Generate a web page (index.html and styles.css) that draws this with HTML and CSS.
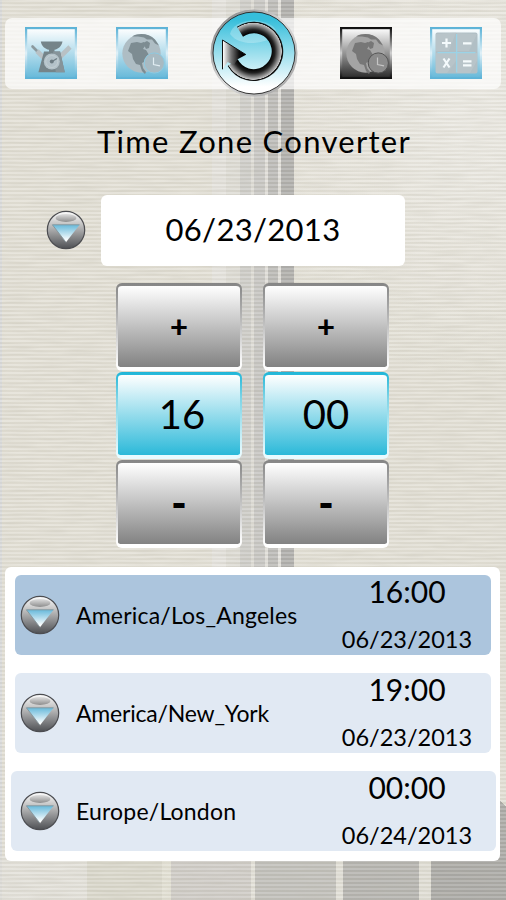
FILE: index.html
```
<!DOCTYPE html>
<html lang="en">
<head>
  <meta charset="UTF-8">
  <title>Time Zone Converter</title>
  <meta name="viewport" content="width=device-width, initial-scale=1">
  <link rel="stylesheet" href="styles.css">
</head>
<body>
  <!-- Paper texture and shared icon parts -->
  <svg class="texture" width="506" height="900" aria-hidden="true">
    <defs>
      <filter id="linen" x="0" y="0" width="100%" height="100%">
        <feTurbulence type="fractalNoise" baseFrequency="0.03 0.4" numOctaves="2" seed="4"/>
        <feColorMatrix values="0 0 0 0 0.5  0 0 0 0 0.48  0 0 0 0 0.4  0.4 0 0 0 -0.15"/>
      </filter>
      <linearGradient id="tileBlue" x1="0" y1="0" x2="0" y2="1">
        <stop offset="0" stop-color="#fff"/>
        <stop offset="1" stop-color="#67b9d9"/>
      </linearGradient>
      <linearGradient id="edgeBlue" x1="0" y1="0" x2="0" y2="1">
        <stop offset="0" stop-color="#5db3d7"/>
        <stop offset=".5" stop-color="#e0f0f7"/>
        <stop offset="1" stop-color="#5db3d7"/>
      </linearGradient>
      <linearGradient id="tileDark" x1="0" y1="0" x2="0" y2="1">
        <stop offset="0" stop-color="#fff"/>
        <stop offset="1" stop-color="#2b2b2b"/>
      </linearGradient>
      <linearGradient id="edgeDark" x1="0" y1="0" x2="0" y2="1">
        <stop offset="0" stop-color="#111"/>
        <stop offset=".5" stop-color="#d0d0d0"/>
        <stop offset="1" stop-color="#111"/>
      </linearGradient>
      <linearGradient id="ballGray" x1="0" y1="0" x2="0" y2="1">
        <stop offset="0" stop-color="#fff"/>
        <stop offset=".35" stop-color="#c3c3c3"/>
        <stop offset="1" stop-color="#4e5054"/>
      </linearGradient>
      <linearGradient id="ballShine" x1="0" y1="0" x2="0" y2="1">
        <stop offset="0" stop-color="#dedede"/>
        <stop offset="1" stop-color="#8e8e8e"/>
      </linearGradient>
      <linearGradient id="arrowBlue" x1="0" y1="0" x2="0" y2="1">
        <stop offset="0" stop-color="#67b9da"/>
        <stop offset=".9" stop-color="#fff"/>
      </linearGradient>
      <linearGradient id="refreshFill" x1="0" y1="0" x2="0" y2="1">
        <stop offset="0.1" stop-color="#36bedb"/>
        <stop offset=".9" stop-color="#fff"/>
      </linearGradient>
      <radialGradient id="ringShade" gradientUnits="userSpaceOnUse" cx="43.300" cy="42.300" r="30">
        <stop offset=".6" stop-color="#000"/>
        <stop offset=".72" stop-color="#222"/>
        <stop offset=".94" stop-color="#c4c4c4"/>
        <stop offset=".955" stop-color="#111"/>
      </radialGradient>
      <linearGradient id="arrowHead" gradientUnits="userSpaceOnUse" x1="13" y1="0" x2="33" y2="0">
        <stop offset="0" stop-color="#fff"/>
        <stop offset=".4" stop-color="#777"/>
        <stop offset=".8" stop-color="#111"/>
        <stop offset="1" stop-color="#000"/>
      </linearGradient>
      <linearGradient id="ringRim" x1="0" y1="0" x2="1" y2="1">
        <stop offset="0" stop-color="#777"/>
        <stop offset=".5" stop-color="#ddd"/>
        <stop offset="1" stop-color="#999"/>
      </linearGradient>
      <symbol id="drop" viewBox="0 0 40 40">
        <circle cx="20" cy="20" r="18.7" fill="url(#ballGray)" stroke="#4c4d51" stroke-width="1.2"/>
        <ellipse cx="20" cy="8" rx="10.5" ry="3.9" fill="url(#ballShine)"/>
        <path d="M6.4 14.8h27.2L20 32.3z" fill="url(#arrowBlue)"/>
        <path d="M20 32.3L6.4 14.8h27.2" fill="none" stroke="#85959c" stroke-width=".9"/>
      </symbol>
      <symbol id="globe" viewBox="0 0 52 52">
        <circle class="sea" cx="25.5" cy="26.5" r="19.2"/>
        <path class="land" d="M15 16l6-1 4 1 3-1 1 4-2 3 3 1 3 5-3 3-2 4-2 1 1 5 3 4-1 2-3-3-2-6-4-1-3-5-1-5-4-3z"/>
        <path class="land" d="M16 9.500c7-4 17-3 23 3l4 6-4-2-3-4-5 0-3-2-6-1z"/>
        <path class="land" d="M27 16l4-2 3 2-1 5-3 1z"/>
        <circle class="clock" cx="38.3" cy="36" r="10.1"/>
        <path class="hands" d="M37.5 30.5v7l6.5 1.3"/>
      </symbol>
    </defs>
    <rect width="506" height="900" filter="url(#linen)"/>
  </svg>

  <div class="app">
    <nav class="toolbar">
      <svg class="tool" viewBox="0 0 52 52">
        <rect x="1" y="1" width="50" height="50" fill="url(#tileBlue)" stroke="url(#edgeBlue)" stroke-width="2.4"/>
        <path d="M7.500 19.500l8 8" stroke="#8b999e" stroke-width="2.600" stroke-linecap="round"/>
        <path d="M12 24l7 7M35 30l10-10" stroke="#b8c1c5" stroke-width="4.6"/>
        <path d="M15.8 14.4h21.7c-1 5-4 7.4-8 8.4v1.8h5.6l4.7 20.6H13.4L19 24.6h5v-1.8c-4-1-7.3-3.5-8.2-8.4z" fill="#758489"/>
        <path d="M28 24.6h7.1l4.7 20.6h-9z" fill="#86949a"/>
        <circle cx="26.8" cy="34.5" r="8" fill="#b3c2c9"/>
        <circle cx="26.8" cy="34.5" r="6" fill="none" stroke="#c8d2d6" stroke-width=".7"/>
        <path d="M27 34.5l5-3" stroke="#6c7b82" stroke-width="1.4"/>
        <circle cx="26.8" cy="34.5" r="2" fill="#6c7b82"/>
      </svg>
      <svg class="tool" viewBox="0 0 52 52">
        <rect x="1" y="1" width="50" height="50" fill="url(#tileBlue)" stroke="url(#edgeBlue)" stroke-width="2.4"/>
        <use href="#globe" class="globe-blue"/>
      </svg>
      <svg class="refresh" viewBox="0 0 88 88">
        <circle cx="44" cy="44" r="42.2" fill="url(#refreshFill)" stroke="url(#ringRim)" stroke-width="2.6"/>
        <circle cx="44" cy="44" r="41" fill="none" stroke="#222" stroke-width=".9"/>
        <path d="M20 25c2-11 22-18 39-10 8 4 9 10 5 13-12 7-34 10-44-3z" fill="#fff" opacity=".25"/>
        <path d="M27 17.700A29.700 29.700 0 1 1 17.700 57L27.700 50.300A18 18 0 1 0 33 27.700z" fill="url(#ringShade)"/>
        <path d="M12.500 31L36 45.700l-8.300 4.600-4 6-6-3.200-5.200 7z" fill="url(#arrowHead)"/>
        <path d="M12.500 60.300V31L36 45.700" fill="none" stroke="#111" stroke-width="1"/>
      </svg>
      <svg class="tool" viewBox="0 0 52 52">
        <rect x="1" y="1" width="50" height="50" fill="url(#tileDark)" stroke="url(#edgeDark)" stroke-width="2.4"/>
        <use href="#globe" class="globe-dark"/>
      </svg>
      <svg class="tool" viewBox="0 0 52 52">
        <rect x="1" y="1" width="50" height="50" fill="url(#tileBlue)" stroke="url(#edgeBlue)" stroke-width="2.4"/>
        <rect x="5.5" y="5.5" width="42" height="41" rx="2" fill="#b1bfc5"/>
        <path d="M26 5.5L19 24H6V7zM47 7L39 24H27V6zM26 26v8l-9 12H6V26zM47 26v8l-7 12H27V26z" fill="#c0c9cd" opacity=".5"/>
        <path d="M26.6 7v38.5M7.5 25.6h38" stroke="#9bd3e7" stroke-width="1.3"/>
        <path d="M12 16h9M16.5 11.5v9M33 16.3h8.5M13.5 31.5l6 9M19.5 31.5l-6 9M33 34.3h8.5M33 38.4h8.5" stroke="#f4fafc" stroke-width="2.2"/>
      </svg>
    </nav>

    <h1>Time Zone Converter</h1>

    <div class="date-row">
      <svg class="drop"><use href="#drop"/></svg>
      <div class="date-field"><span>06/23/2013</span></div>
    </div>

    <div class="picker">
      <button type="button" class="key plus">+</button>
      <button type="button" class="key plus">+</button>
      <button type="button" class="key value hours">16</button>
      <button type="button" class="key value">00</button>
      <button type="button" class="key minus">-</button>
      <button type="button" class="key minus">-</button>
    </div>

    <div class="zones">
      <div class="zone active">
        <svg class="drop"><use href="#drop"/></svg>
        <span class="name angeles">America/Los_Angeles</span>
        <div class="when"><span class="time">16:00</span><span class="day">06/23/2013</span></div>
      </div>
      <div class="zone">
        <svg class="drop"><use href="#drop"/></svg>
        <span class="name york">America/New_York</span>
        <div class="when"><span class="time">19:00</span><span class="day">06/23/2013</span></div>
      </div>
      <div class="zone wide">
        <svg class="drop"><use href="#drop"/></svg>
        <span class="name london">Europe/London</span>
        <div class="when"><span class="time">00:00</span><span class="day">06/24/2013</span></div>
      </div>
    </div>
  </div>
</body>
</html>
```
FILE: styles.css
```
:root {
  --paper: #e3e0d6;
  --text: #000;
}
* {
  box-sizing: border-box;
}
body {
  margin: 0;
  width: 506px;
  height: 900px;
  overflow: hidden;
  font-family: Lato, sans-serif;
  color: var(--text);
  /* weave, bottom swatches, edge of the right swatch, vertical stripes, light */
  background:
    repeating-linear-gradient(rgba(255, 255, 255, 0.16) 0 2px, rgba(120, 115, 90, 0.05) 2px 4px),
    linear-gradient(90deg, #deddd9 2px, #e3e1da 2px 87px, #dad8cc 87px 162px, #e3e1d5 162px 171px, #cfccc7 171px 251px, #e3e1d9 251px 255px, #c0bfba 255px 336px, #e2e0d8 336px 343px, #b4b3af 343px 419px, #e0ded5 419px 431px, #a9a8a5 431px) 0 856px / 506px 44px no-repeat,
    linear-gradient(45deg, #aaa9a6 72%, transparent 73%) 496px 801px / 10px 10px no-repeat,
    linear-gradient(#aaa9a6, #aaa9a6) 496px 810px / 10px 50px no-repeat,
    linear-gradient(90deg, #dadbdc 2px, transparent 2px 212px, #e5e3de 212px 226px, #dedcd5 226px 240px, #cecdc9 240px 251px, #dedcd6 251px 254px, #c7c6c3 254px 265px, #e1dfda 265px 268px, #bbbab7 268px 278px, #e3e1dc 278px 281px, #afaeac 281px 294px, transparent 294px),
    radial-gradient(circle at 480px 120px, #eceae4, transparent 260px),
    var(--paper);
}
.texture {
  position: absolute;
  top: 0;
  left: 0;
}
.app {
  position: relative;
  padding: 0 6px 0 5px;
}
.toolbar {
  display: flex;
  align-items: center;
  justify-content: space-between;
  width: 496px;
  height: 71px;
  margin-top: 18px;
  padding: 0 19px 1px 20px;
  background: rgba(255, 255, 255, 0.7);
  border-radius: 7px;
}
.tool {
  width: 52px;
  height: 52px;
}
.refresh {
  width: 88px;
  height: 88px;
  margin: -9px 3px -9px 4px;
}
.globe-blue {
  --sea: #aebdc4;
  --land: #7d8c92;
  --clock: #a8bac2;
  --clock-rim: #8ecae1;
  --hand: #e1edf2;
}
.globe-dark {
  --sea: #a4a4a4;
  --land: #777;
  --clock: #8b8b8b;
  --clock-rim: #555;
  --hand: #c5c5c5;
}
.sea {
  fill: var(--sea);
}
.land {
  fill: var(--land);
}
.clock {
  fill: var(--clock);
  stroke: var(--clock-rim);
}
.hands {
  fill: none;
  stroke: var(--hand);
  stroke-width: 1.2;
}
h1 {
  margin: 32px 0 0 92px;
  font-size: 31px;
  line-height: 40px;
  font-weight: 400;
  letter-spacing: 1.3px;
  white-space: nowrap;
}
.date-row {
  display: flex;
  align-items: center;
  gap: 15px;
  height: 71px;
  margin: 34px 0 0 41px;
}
.drop {
  flex: none;
  width: 40px;
  height: 40px;
}
.date-row .drop {
  margin-top: -2px;
}
.date-field {
  width: 304px;
  height: 71px;
  background: #fff;
  border-radius: 6px;
  font-size: 31px;
  line-height: 68px;
  letter-spacing: 0.3px;
  text-align: center;
}
.picker {
  display: grid;
  grid-template-columns: 126px 126px;
  grid-auto-rows: 87.5px;
  gap: 1px 21px;
  margin: 17px 0 0 111px;
}
.key {
  padding: 0;
  border: solid transparent;
  border-width: 3px 2px 4px;
  border-radius: 6px;
  background:
    linear-gradient(#fff, #828282) padding-box,
    linear-gradient(#858585, #aaa 30%, #fff 95%) border-box;
  font-family: Lato, sans-serif;
  font-size: 31px;
  font-weight: 900;
  color: var(--text);
}
.key.plus {
  padding-bottom: 1px;
}
.key.minus {
  padding-top: 0;
  font-family: "DejaVu Sans", sans-serif;
  font-weight: 700;
  font-size: 36px;
}
.key.value {
  padding-bottom: 2px;
  background:
    linear-gradient(#fff, #2bb9d9) padding-box,
    linear-gradient(#20b6d8, #7ed4e6 30%, #e8fbff 95%) border-box;
  font-size: 40px;
  font-weight: 400;
}
.key.hours {
  padding-left: 6px;
}
.zones {
  display: flex;
  flex-direction: column;
  gap: 18px;
  width: 495px;
  height: 294px;
  margin-top: 19px;
  padding: 8px 9px 0 10px;
  background: #fff;
  border-radius: 6px;
}
.zone {
  display: flex;
  align-items: center;
  flex: none;
  height: 80px;
  padding: 0 15px 0 5px;
  background: #e1e9f3;
  border-radius: 6px;
}
.zone.active {
  background: #acc5dd;
}
.zone.wide {
  margin: 0 -5px 0 -4px;
  padding: 0 20px 0 9px;
}
.name {
  flex: 1;
  padding-left: 16px;
  font-size: 23px;
  white-space: nowrap;
}
.angeles {
  letter-spacing: 0.2px;
}
.york {
  letter-spacing: -0.2px;
}
.london {
  letter-spacing: 0.2px;
}
.when {
  display: flex;
  flex-direction: column;
  align-items: center;
  width: 138px;
}
.time {
  font-size: 30px;
  line-height: 48px;
  margin-top: 1px;
}
.day {
  font-size: 23.5px;
  line-height: 48px;
}
```
